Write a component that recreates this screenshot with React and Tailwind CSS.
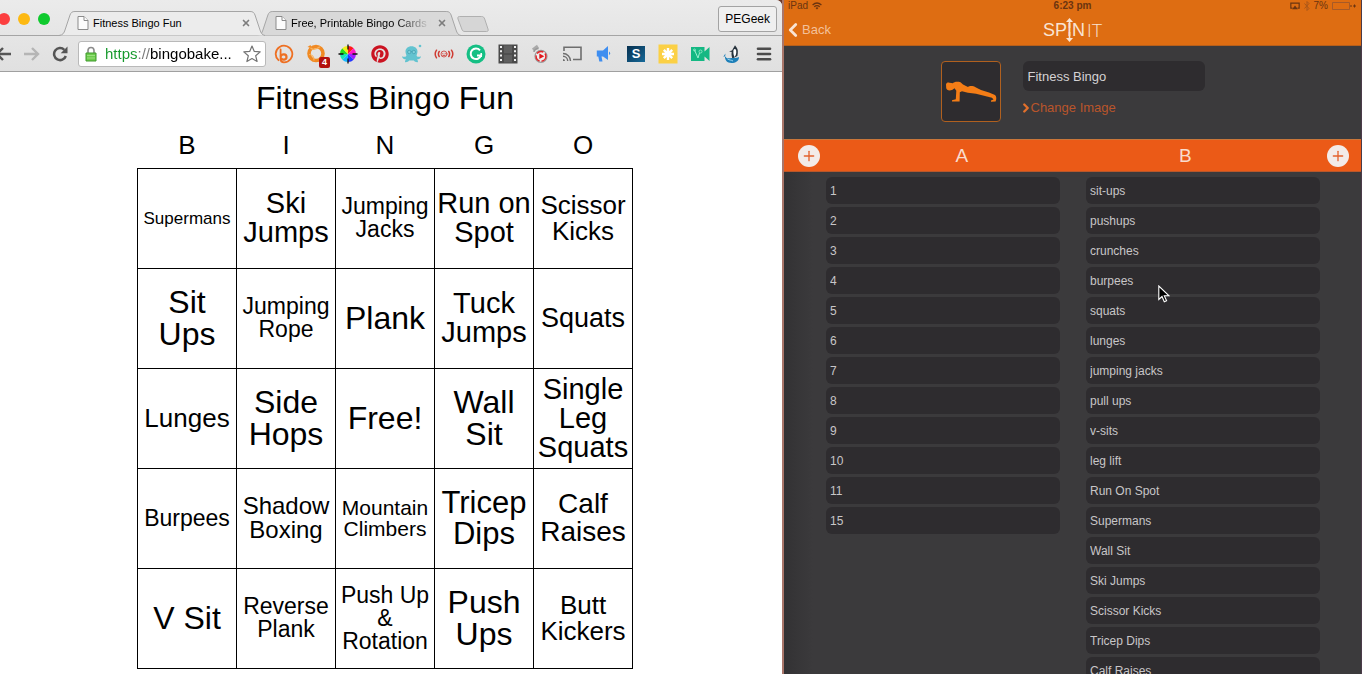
import { ChevronLeft, ChevronRight, Menu, Plus, X } from 'lucide-react'
import { FaPinterest } from 'react-icons/fa'

const bingoLetters = ['B', 'I', 'N', 'G', 'O']

const bingoRows = [
  [
    { lines: ['Supermans'], size: 'text-[17px]/[17px]' },
    { lines: ['Ski', 'Jumps'], size: 'text-[29px]/[29px]' },
    { lines: ['Jumping', 'Jacks'], size: 'text-[23px]/[23px]' },
    { lines: ['Run on', 'Spot'], size: 'text-[29px]/[29px]' },
    { lines: ['Scissor', 'Kicks'], size: 'text-[26px]/[26px]' },
  ],
  [
    { lines: ['Sit', 'Ups'], size: 'text-[32px]/[32px]' },
    { lines: ['Jumping', 'Rope'], size: 'text-[23px]/[23px]' },
    { lines: ['Plank'], size: 'text-[32px]/[32px]' },
    { lines: ['Tuck', 'Jumps'], size: 'text-[29px]/[29px]' },
    { lines: ['Squats'], size: 'text-[27px]/[27px]' },
  ],
  [
    { lines: ['Lunges'], size: 'text-[26px]/[26px]' },
    { lines: ['Side', 'Hops'], size: 'text-[32px]/[32px]' },
    { lines: ['Free!'], size: 'text-[32px]/[32px]' },
    { lines: ['Wall', 'Sit'], size: 'text-[32px]/[32px]' },
    { lines: ['Single', 'Leg', 'Squats'], size: 'text-[29px]/[29px]' },
  ],
  [
    { lines: ['Burpees'], size: 'text-[23px]/[23px]' },
    { lines: ['Shadow', 'Boxing'], size: 'text-[24px]/[24px]' },
    { lines: ['Mountain', 'Climbers'], size: 'text-[21px]/[21px]' },
    { lines: ['Tricep', 'Dips'], size: 'text-[31px]/[31px]' },
    { lines: ['Calf', 'Raises'], size: 'text-[28px]/[28px]' },
  ],
  [
    { lines: ['V Sit'], size: 'text-[32px]/[32px]' },
    { lines: ['Reverse', 'Plank'], size: 'text-[23px]/[23px]' },
    { lines: ['Push Up', '&', 'Rotation'], size: 'text-[23px]/[23px]' },
    { lines: ['Push', 'Ups'], size: 'text-[32px]/[32px]' },
    { lines: ['Butt', 'Kickers'], size: 'text-[26px]/[26px]' },
  ],
]

const wheelA = ['1', '2', '3', '4', '5', '6', '7', '8', '9', '10', '11', '15']

const wheelB = [
  'sit-ups', 'pushups', 'crunches', 'burpees', 'squats', 'lunges', 'jumping jacks', 'pull ups', 'v-sits',
  'leg lift', 'Run On Spot', 'Supermans', 'Wall Sit', 'Ski Jumps', 'Scissor Kicks', 'Tricep Dips', 'Calf Raises',
]

const extensions = [
  {
    name: 'Bitly',
    icon: (
      <svg viewBox="0 0 20 20" className="w-5 h-5" fill="none" stroke="#ee7023" strokeLinecap="round">
        <path d="M4.500 16.200A8.300 8.300 0 1 1 10 18.300c-2.600 0-3.400-1.200-3.400-3V5.500" strokeWidth="1.800" />
        <path d="M6.800 12c1-2.300 5.700-2.300 5.700 1 0 3.200-4.200 3.200-5.400 1.500" strokeWidth="2.200" />
      </svg>
    ),
  },
  {
    name: 'Notifications',
    badge: '4',
    icon: (
      <svg viewBox="0 0 20 20" className="w-5 h-5" fill="none">
        <circle cx="10" cy="9.500" r="7" stroke="#f08a24" strokeWidth="3.600" />
        <path d="M4 2.500c1 3.500 5 4 10 .3M3 10.500c3 0 5 2 5 6" stroke="#f9b25c" strokeWidth="1.200" />
        <path d="M1.500 3l3-2 1 3z" fill="#f08a24" />
      </svg>
    ),
  },
  {
    name: 'Color picker',
    icon: (
      <svg viewBox="0 0 20 20" className="w-5 h-5">
        <path d="M10 10V2a8 8 0 0 1 5.700 2.300z" fill="#ff1a1a" />
        <path d="M10 10l5.700-5.700A8 8 0 0 1 18 10z" fill="#ff18c8" />
        <path d="M10 10h8a8 8 0 0 1-2.300 5.700z" fill="#a31cff" />
        <path d="M10 10l5.700 5.700A8 8 0 0 1 10 18z" fill="#2436ff" />
        <path d="M10 10v8a8 8 0 0 1-5.700-2.300z" fill="#18b8ff" />
        <path d="M10 10l-5.700 5.700A8 8 0 0 1 2 10z" fill="#18e6b0" />
        <path d="M10 10H2a8 8 0 0 1 2.300-5.700z" fill="#26e01c" />
        <path d="M10 10L4.300 4.300A8 8 0 0 1 10 2z" fill="#f4ee1a" />
        <path d="M10 .5v5M10 14.500v5M.5 10h5M14.500 10h5" stroke="#111" strokeWidth="1.300" />
      </svg>
    ),
  },
  { name: 'Pinterest', icon: <FaPinterest className="w-[18px] h-[18px] text-[#cb1321]" /> },
  {
    name: 'Octopus',
    icon: (
      <svg viewBox="0 0 20 20" className="w-5 h-5" fill="#62c3d0">
        <path d="M9.500 2.200c3.700 0 6 2.500 6 5.300 0 2-.9 3-.9 4 0 1.500 2.500 1.800 4.400.7-.3 2.300-2.500 3.300-4.200 3.200 1 .6 1.500 1.600 1 2.900-2 .2-3-.6-4-1.700h-4.600c-1 1.100-2 1.900-4 1.700-.5-1.300 0-2.300 1-2.900-1.700.1-3.900-.9-4.200-3.200 1.900 1.100 4.400.8 4.400-.7 0-1-.9-2-.9-4 0-2.800 2.300-5.300 6-5.300z" />
        <path d="M6 7.500h7" stroke="#4aa5b6" />
        <circle cx="7.300" cy="8" r="1.700" fill="#7fd0da" stroke="#4aa5b6" strokeWidth=".9" />
        <circle cx="11.800" cy="8" r="1.700" fill="#7fd0da" stroke="#4aa5b6" strokeWidth=".9" />
        <circle cx="18" cy="2" r="1.300" />
      </svg>
    ),
  },
  {
    name: 'Broadcast',
    icon: (
      <svg viewBox="0 0 20 20" className="w-5 h-5" fill="none" stroke="#cf3b32" strokeWidth="1.500" strokeLinecap="round">
        <path d="M2.500 6.200q-2.600 3.800 0 7.600M5.200 7.500q-1.600 2.500 0 5M17.500 6.200q2.600 3.800 0 7.600M14.800 7.500q1.600 2.500 0 5" />
        <circle cx="10" cy="10" r="3" strokeWidth=".8" />
        <path d="M8.800 9.300v.1M11.200 9.300v.1M8.800 11.300h2.400" strokeWidth="1" />
      </svg>
    ),
  },
  {
    name: 'Grammarly',
    icon: (
      <svg viewBox="0 0 20 20" className="w-5 h-5" fill="none">
        <circle cx="10" cy="10" r="9.500" fill="#15bf84" />
        <path d="M14 6.300A5.300 5.300 0 1 0 15 11.500h-4" stroke="#fff" strokeWidth="2" />
        <path d="M15.200 9v4" stroke="#fff" strokeWidth="1.600" />
      </svg>
    ),
  },
  {
    name: 'Film strip',
    icon: (
      <svg viewBox="0 0 20 20" className="w-5 h-5">
        <path d="M.5.500h19v19H.5z" fill="#4a4a4a" />
        <path d="M6 1.500h8v7.800H6zM6 10.700h8v7.800H6z" fill="#5f5f5f" />
        <path d="M3 2v17M17 2v17" stroke="#f2f2f2" strokeWidth="2" strokeDasharray="2 2.300" />
      </svg>
    ),
  },
  {
    name: 'Video recorder',
    icon: (
      <svg viewBox="0 0 20 20" className="w-5 h-5" fill="none">
        <path d="M2 4.500L7 .8l2 3.200-5 3.500z" fill="#aaa" />
        <path d="M4 8c0-2 2-3.500 4.500-3.500" stroke="#999" strokeWidth="1.500" />
        <circle cx="11" cy="12.300" r="6" fill="#eee" stroke="#9a9a9a" strokeWidth="1.200" />
        <circle cx="11" cy="12.300" r="4.900" stroke="#e2262a" strokeWidth="1.500" strokeDasharray="7 2" />
        <path d="M9.300 9.500l5 2.800-5 2.800z" fill="#e2161b" />
      </svg>
    ),
  },
  {
    name: 'Cast',
    icon: (
      <svg viewBox="0 0 20 18" className="w-5 h-[18px]" fill="none" stroke="#6e6e6e" strokeWidth="1.600">
        <path d="M2 6V2.300h17V14.500h-8" />
        <path d="M1 8.500a7.500 7.500 0 0 1 7.500 7.500M1 11.300a4.700 4.700 0 0 1 4.700 4.700" strokeWidth="1.400" />
        <path d="M1 14a2 2 0 0 1 2 2H1z" fill="#6e6e6e" stroke="none" />
      </svg>
    ),
  },
  {
    name: 'Announce',
    icon: (
      <svg viewBox="0 0 20 20" className="w-5 h-5" fill="#3f8ef0">
        <path d="M2.800 6.500H9l5-4.500v14l-5-3.600H7.500l1 5H5.300l-1-5H2.800z" />
        <path d="M15 7.500a2 2 0 0 1 0 3.600z" />
      </svg>
    ),
  },
  {
    name: 'Snagit',
    icon: <span className="grid place-items-center w-[18px] h-4 bg-linear-to-br from-[#07304f] to-[#176a9a] text-white text-[13px]/[16px] font-bold">S</span>,
  },
  {
    name: 'Starburst',
    icon: (
      <svg viewBox="0 0 20 20" className="w-5 h-5" fill="none">
        <path d="M.5.500h19v19H.5z" fill="#fbd045" />
        <path d="M10 4v12M4 10h12M5.800 5.800l8.400 8.400M14.200 5.800l-8.400 8.400" stroke="#fff" strokeWidth="2.400" />
      </svg>
    ),
  },
  {
    name: 'Video notes',
    icon: (
      <svg viewBox="0 0 20 20" className="w-5 h-5" fill="none">
        <path d="M1 3h13.500v4.500L19.500 3v14l-5-4.500V17H1z" fill="#14b883" />
        <path d="M4.500 6l3.500 8 1.500-5" stroke="#9df0cf" strokeWidth="1" />
        <circle cx="4.500" cy="6" r="1" stroke="#9df0cf" strokeWidth=".8" />
        <circle cx="10.500" cy="7.500" r="1.500" stroke="#9df0cf" strokeWidth=".8" />
      </svg>
    ),
  },
  {
    name: 'Swan',
    icon: (
      <svg viewBox="0 0 20 20" className="w-5 h-5">
        <path d="M10 6.500L13 1.200l1.600 2.300c1.400 1.600 1.600 4.500.8 8.500l-5 2.500c-1-2.500-1.200-5-.4-8z" fill="#26323c" />
        <path d="M11.500 6c1-1.500 2.300-1.200 2.700.8.300 2-.3 5-1.700 6.200-1-1.500-1.400-4.600-1-7z" fill="#fff" />
        <path d="M7 7.500l3.500-1.200-.2 1.700z" fill="#26323c" />
        <path d="M3.500 9.500c-1 1.500-2 2.500-2 3.500 1.200-.8 2.200-.4 2.800.8 1.500 1 3.500.2 5.200.2 2.500 0 5 .3 7.500-1 0 4-3.500 6-7.500 6-4.500 0-6.500-2.800-6.500-6z" fill="#1d7fb8" />
        <path d="M5.500 15c2 1.300 3.500.8 5.500 2" stroke="#9ed9f2" fill="none" />
      </svg>
    ),
  },
]

function PageIcon() {
  return (
    <svg viewBox="0 0 12 14" className="w-3 h-3.5 shrink-0" fill="#fcfcfc" stroke="#8b8b8b">
      <path d="M1 .5h6l4 4v9H1z" />
      <path d="M7 .5v4h4" />
    </svg>
  )
}

function BrowserTab({ title, active, className }) {
  return (
    <div className={`relative flex h-6 items-center pr-3 pl-[18px] ${className}`}>
      <svg viewBox="0 0 206 25" preserveAspectRatio="none" className="absolute inset-0 w-full h-[25px]">
        <path
          d="M0 24.500C4 24 5 22 6 19L11 4C12 1.500 13 .5 16 .5H191C194 .5 195 1.500 196 4L201 19C202 22 203 24 206 24.500"
          fill={active ? '#ececec' : '#d9d9d9'}
          stroke="#a5a5a5"
        />
      </svg>
      <div className="relative flex flex-1 items-center gap-1 min-w-0">
        <PageIcon />
        <span
          className={
            active
              ? 'flex-1 truncate text-[11px]/[16px] text-black'
              : 'flex-1 overflow-hidden whitespace-nowrap text-[11px]/[16px] bg-linear-to-r from-black from-75% to-transparent bg-clip-text text-transparent'
          }
        >
          {title}
        </span>
        <button aria-label={`Close ${title}`} className="p-0.5 text-[#7d7d7d]">
          <X className="w-2.5 h-2.5" strokeWidth={4} />
        </button>
      </div>
    </div>
  )
}

function BrowserChrome() {
  return (
    <header className="bg-[#e6e6e6] bg-linear-to-b from-[#ebebeb] to-[#e0e0e0] rounded-tr-md border-b border-[#a0a0a0]">
      <div className="flex h-9 items-end border-b border-[#a5a5a5]">
        <div className="flex gap-2 -ml-0.5 mb-[10px]">
          <button aria-label="Close window" className="w-3 h-3 rounded-full bg-[#fc3f40]" />
          <button aria-label="Minimize window" className="w-3 h-3 rounded-full bg-[#fdb912]" />
          <button aria-label="Zoom window" className="w-3 h-3 rounded-full bg-[#0fca2e]" />
        </div>
        <BrowserTab title="Fitness Bingo Fun" active className="z-10 ml-[9px] w-[206px]" />
        <BrowserTab title="Free, Printable Bingo Cards I" className="-ml-2 w-[204px]" />
        <button aria-label="New tab" className="self-start mt-4 -ml-1">
          <svg viewBox="0 0 32 16" className="w-8 h-4" fill="#d6d6d6" stroke="#b0b0b0">
            <path d="M2.500.500h22c2 0 2.500.800 3.200 2.500l3.300 10c.6 1.800 0 2.500-1.500 2.500H8c-2 0-2.700-.8-3.200-2.500L1 3C.5 1.300 1 .5 2.500.5z" />
          </svg>
        </button>
        <button className="self-start ml-auto mt-1.5 mr-[5px] h-[26px] px-1.5 rounded-[3px] border border-[#a3a3a3] bg-[#efefef] text-xs text-black">
          PEGeek
        </button>
      </div>

      <div className="flex h-[35px] items-center pr-2">
        <div className="flex items-center w-[78px] gap-3 -ml-2 text-[#555]">
          <button aria-label="Back">
            <svg viewBox="0 0 20 16" className="w-5 h-4" fill="none" stroke="currentColor" strokeWidth="2.400">
              <path d="M19 8H5M11 2L5 8l6 6" />
            </svg>
          </button>
          <button aria-label="Forward" className="text-[#b5b5b5]">
            <svg viewBox="0 0 16 16" className="w-4 h-4" fill="none" stroke="currentColor" strokeWidth="2.400">
              <path d="M0 8h14M8 2l6 6-6 6" />
            </svg>
          </button>
          <button aria-label="Reload">
            <svg viewBox="0 0 16 16" className="w-4 h-4" fill="none" stroke="currentColor" strokeWidth="2.500">
              <path d="M12.300 3.800A6 6 0 1 0 13.800 10" />
              <path d="M15.500.500v6.800H8.700z" fill="currentColor" stroke="none" />
            </svg>
          </button>
        </div>
        <div className="flex items-center w-[188px] h-[26px] ml-2 pl-1.5 pr-1 gap-2 bg-white border border-[#b9b9b9] rounded-[3px]">
          <svg viewBox="0 0 12 16" className="w-3 h-4 shrink-0" fill="none">
            <path d="M3 8V4.500a3 3 0 0 1 6 0V8" stroke="#8b8b8b" strokeWidth="1.600" />
            <path d="M1 7h10v8H1z" fill="#6ccb4c" stroke="#3f9a2c" />
            <path d="M2 9.500h8M2 12h8" stroke="#9be07f" />
          </svg>
          <input
            aria-label="Address"
            defaultValue="https://bingobake..."
            className="flex-1 min-w-0 h-5 text-[15px]/[20px] outline-none bg-[linear-gradient(90deg,#14992b_33px,#777_33px,#777_45px,#000_45px)] bg-clip-text text-transparent"
          />
          <button aria-label="Bookmark this page" className="-ml-1">
            <svg viewBox="0 0 18 18" className="w-[18px] h-[18px]" fill="#fff" stroke="#737373" strokeWidth="1.200" strokeLinejoin="round">
              <path d="M9 1l2.300 5.400 5.900.5-4.500 3.900 1.400 5.700L9 13.500l-5.100 3 1.400-5.700L.8 6.900l5.900-.5z" />
            </svg>
          </button>
        </div>
        <div className="flex flex-1 items-center justify-between pl-2">
          {extensions.map((ext) => (
            <button key={ext.name} aria-label={ext.name} className="relative flex w-5 h-5 items-center justify-center">
              {ext.icon}
              {ext.badge && (
                <span className="absolute -right-1 -bottom-1 px-[3px] rounded-[2px] bg-[#b3120e] text-white text-[9px]/[11px] font-bold">
                  {ext.badge}
                </span>
              )}
            </button>
          ))}
          <button aria-label="Menu" className="flex w-5 h-5 items-center justify-center text-[#4c4c4c]">
            <Menu className="w-[18px] h-[18px]" strokeWidth={3.500} />
          </button>
        </div>
      </div>
    </header>
  )
}

function BingoCard() {
  return (
    <main className="flex-1 pt-2 pr-3 bg-white text-black">
      <h1 className="text-center text-[32px]/[36px]">Fitness Bingo Fun</h1>
      <table className="mx-auto mt-1.5 w-[496px] table-fixed border-collapse text-center">
        <thead>
          <tr className="h-[46px]">
            {bingoLetters.map((letter) => (
              <th key={letter} className="p-0 font-normal text-[26px]/[26px]">{letter}</th>
            ))}
          </tr>
        </thead>
        <tbody>
          {bingoRows.map((row, i) => (
            <tr key={i} className="h-[100px]">
              {row.map((cell) => (
                <td key={cell.lines.join(' ')} className={`p-0 border border-black whitespace-nowrap ${cell.size}`}>
                  {cell.lines.map((line) => (
                    <div key={line}>{line}</div>
                  ))}
                </td>
              ))}
            </tr>
          ))}
        </tbody>
      </table>
    </main>
  )
}

function WheelList({ name, items }) {
  return (
    <ul className="flex flex-col gap-[3px]">
      {items.map((item, i) => (
        <li key={item}>
          <input
            aria-label={`Wheel ${name} item ${i + 1}`}
            defaultValue={item}
            className="block w-full h-[27px] px-1 rounded-md bg-[#2e2c2f] text-xs text-[#c8c6c8] outline-none"
          />
        </li>
      ))}
    </ul>
  )
}

function AddButton({ label }) {
  return (
    <button aria-label={label} className="grid place-items-center w-[22px] h-[22px] rounded-full bg-[#f3ebe8] text-[#e4622c]">
      <Plus className="w-4 h-4" strokeWidth={2} />
    </button>
  )
}

function SpinItApp() {
  return (
    <section className="relative flex flex-col min-w-0 border-l-2 border-r border-l-[#a9766a] border-r-[#4b3b4a] bg-[#3b3a3c] overflow-hidden">
      <header className="h-[46px] bg-[#de6d12] border-b border-[#b65f1c]">
        <div className="grid grid-cols-3 items-center h-3 pl-1 pr-1 text-[10px]/[12px] text-[#6b3410]">
          <div className="flex items-center gap-1">
            iPad
            <svg viewBox="0 0 12 9" className="w-2.5 h-2" fill="none" stroke="currentColor" strokeWidth="1.600">
              <path d="M.7 3.200q5.300-4.600 10.600 0M2.700 5.400q3.300-2.800 6.600 0" />
              <path d="M4.300 6.800q1.700-1.400 3.400 0L6 8.800z" fill="currentColor" stroke="none" />
            </svg>
          </div>
          <div className="text-center font-bold">6:23 pm</div>
          <div className="flex items-center justify-end gap-1">
            <svg viewBox="0 0 12 9" className="w-2.5 h-2" fill="none" stroke="currentColor" strokeWidth="1.400">
              <path d="M3 7H1V1h10v6H9" />
              <path d="M6 4l3.500 4.500h-7z" fill="currentColor" stroke="none" />
            </svg>
            <svg viewBox="0 0 6 10" className="w-1.5 h-2.5" fill="none" stroke="#a9571a">
              <path d="M.5 2.500l4.500 5L3 9.500v-9l2 2-4.500 5" />
            </svg>
            <span>7%</span>
            <svg viewBox="0 0 25 8" className="w-[25px] h-2" fill="none" stroke="currentColor">
              <path d="M.5.500h17v7H.5z" stroke="#a65a28" />
              <path d="M19 3v2M21 4h3M22.500 2.500v3" />
            </svg>
          </div>
        </div>
        <div className="grid grid-cols-3 items-center h-[34px] px-1 pt-0.5 text-[#f9e4d3]">
          <a href="#back" className="flex items-center text-[13px]/[16px] text-[#f3c19a]">
            <ChevronLeft className="-ml-1.5 w-[22px] h-[22px] text-[#f9e4d3]" strokeWidth={3} />
            <span className="-ml-0.5">Back</span>
          </a>
          <h2 className="flex justify-center text-[18px]/[22px]">
            <span>SP</span>
            <span className="relative">
              I
              <svg viewBox="0 0 7 24" className="absolute inset-x-0 -top-px -mx-px w-[7px] h-6" fill="#f9e4d3">
                <path d="M3.500 0L7 4H4.300v6H2.700V4H0zM3.500 24L7 20H4.300v-6H2.700v6H0z" />
              </svg>
            </span>
            <span>N</span>
            <span className="ml-0.5 font-['Lato',sans-serif] font-light">IT</span>
          </h2>
        </div>
      </header>

      <div className="flex justify-center gap-[22px] h-[93px] pt-[15px]">
        <div className="grid place-items-center w-[60px] h-[61px] rounded-[4px] border border-[#b0601f] bg-[#2e2c2f]">
          <svg viewBox="0 0 52 22" className="w-[52px] h-[22px]" fill="#f47d16">
            <path d="M1 3.500C1.500 1.500 3 1.300 4.500 1.800L8 2.200C9 .8 12 .2 15.500 1.200L18 3.500L23 6C24.500 4.600 28 4.600 31 6.500L36 9L44 11.500L50 14C51.700 15.500 51.600 18 50.600 20.500L46 20.800V19.500L48.500 18.500L47 16.800L40 15L31 12.800L23 11.800L17 10.200L14.800 11.200L14.600 20.500H7V19.300L10.800 18.300L11.300 9.800L9.500 7.200L7.500 8.800C4.500 10 1.500 9.500 1.200 7Z" />
          </svg>
        </div>
        <div className="w-[182px]">
          <input
            aria-label="Title"
            defaultValue="Fitness Bingo"
            className="block w-full h-[30px] px-[5px] rounded-md bg-[#2e2c2f] text-[13px] text-[#d4d2d4] outline-none"
          />
          <a href="#change-image" className="flex items-center mt-2 text-[13px]/[18px] text-[#b9552b]">
            <ChevronRight className="-ml-1 -mr-0.5 w-3.5 h-3.5 text-[#e2702c]" strokeWidth={4} />
            Change Image
          </a>
        </div>
      </div>

      <div className="flex items-center h-[33px] shrink-0 pl-[14px] pr-3 bg-[#eb5a17] border-y border-t-[#c9763a] border-b-[#b9572a]">
        <AddButton label="Add to wheel A" />
        <div className="grid grid-cols-2 flex-1 px-[30px] text-center text-[19px]/[22px] text-[#f9dccd]">
          <h3>A</h3>
          <h3>B</h3>
        </div>
        <AddButton label="Add to wheel B" />
      </div>

      <div className="grid grid-cols-2 flex-1 min-h-0 gap-[26px] pl-[42px] pr-[41px] pt-[5px] bg-linear-to-r from-[#333234] to-[#3b3a3c] to-5%">
        <WheelList name="A" items={wheelA} />
        <WheelList name="B" items={wheelB} />
      </div>

      <svg viewBox="0 0 12 18" className="absolute top-[285px] left-[374px] w-3 h-[18px]" fill="#000" stroke="#fff" strokeWidth="1.100">
        <path d="M.8 1v13.500l3.200-3 2.300 5.300 2.300-1L6.300 10.700h4.500z" />
      </svg>
    </section>
  )
}

export default function App() {
  return (
    <div className="grid grid-cols-[782fr_580fr] h-screen overflow-hidden bg-[#6d3a2a] font-['Liberation_Sans',Arial,sans-serif]">
      <div className="flex flex-col min-w-0">
        <BrowserChrome />
        <BingoCard />
      </div>
      <SpinItApp />
    </div>
  )
}
